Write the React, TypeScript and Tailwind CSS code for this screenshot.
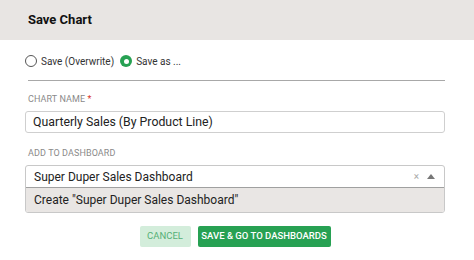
import React from "react";

export default function App() {
  return (
    <div className="w-[474px] h-[260px] bg-white overflow-hidden" style={{ fontFamily: "Roboto, 'Liberation Sans', sans-serif" }}>
      <div className="h-[40px] bg-[#e8e5e3] flex items-center pl-[28px]">
        <span className="text-[13px] font-bold text-[#111]">Save Chart</span>
      </div>
      <div className="pl-[25px] pr-[29px]">
        <div className="mt-[13px] h-[16px] flex items-center text-[10px] text-[#333]">
          <span className="w-[12px] h-[12px] rounded-full border-[1.5px] border-[#555] mr-[4px]" />
          <span>Save (Overwrite)</span>
          <span className="ml-[6px] w-[12px] h-[12px] rounded-full bg-[#27a153] flex items-center justify-center mr-[4px]">
            <span className="w-[5px] h-[5px] rounded-full bg-white" />
          </span>
          <span>Save as ...</span>
        </div>
        <div className="mt-[11px] ml-[3px] h-[1px] bg-[#a8a8a8]" />
        <div className="mt-[12px] ml-[3px] h-[12px] leading-[12px] text-[9px] text-[#8a8a8a] tracking-[0.1px]">
          CHART NAME <span className="text-[#d9342b]">*</span>
        </div>
        <div className="mt-[6px] h-[22px] border border-[#cfcfcf] rounded-[3px] flex items-center pl-[7px] text-[12.3px] text-[#222]">
          Quarterly Sales (By Product Line)
        </div>
        <div className="mt-[14px] ml-[3px] h-[12px] leading-[12px] text-[9px] text-[#8a8a8a] tracking-[0.1px]">
          ADD TO DASHBOARD
        </div>
        <div className="mt-[6px] rounded-[3px] border border-[#c8c8c8] overflow-hidden">
          <div className="h-[22px] flex items-center pl-[8px] pr-[9px] text-[12px] text-[#222] border-b border-[#a0a0a0]">
            <span className="flex-1">Super Duper Sales Dashboard</span>
            <span className="text-[10px] text-[#aaa] mr-[8px]">×</span>
            <svg width="8" height="5" viewBox="0 0 8 5"><path d="M0 5 L4 0 L8 5 Z" fill="#777" /></svg>
          </div>
          <div className="h-[24px] bg-[#e9e6e4] flex items-center pl-[8px] text-[12px] text-[#222]">
            Create "Super Duper Sales Dashboard"
          </div>
        </div>
        <div className="mt-[13px] flex justify-center gap-[7px]">
          <div className="h-[21px] w-[51px] bg-[#d3eddb] rounded-[2px] flex items-center justify-center text-[9.5px] text-[#55b076] whitespace-nowrap">CANCEL</div>
          <div className="h-[21px] w-[133px] bg-[#27a153] rounded-[2px] flex items-center justify-center text-[9.5px] text-white font-medium whitespace-nowrap">SAVE &amp; GO TO DASHBOARDS</div>
        </div>
      </div>
    </div>
  );
}
